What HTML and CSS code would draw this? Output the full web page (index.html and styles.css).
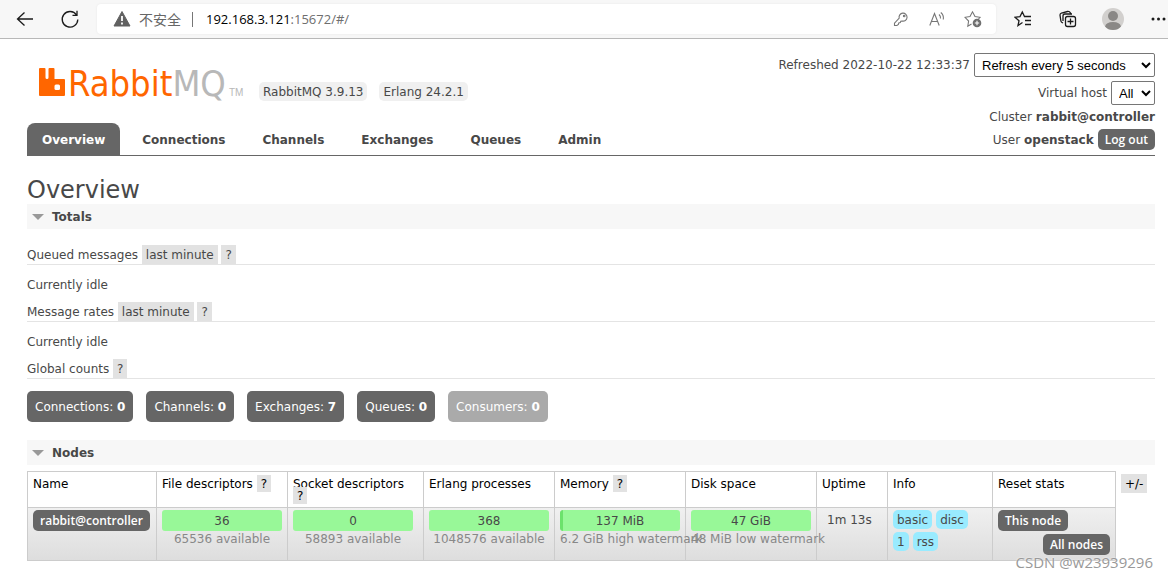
FILE: index.html
```html
<!DOCTYPE html>
<html lang="en">
<head>
	<meta charset="UTF-8">
	<meta name="viewport" content="width=device-width, initial-scale=1.0">
	<title>RabbitMQ Management</title>
	<link rel="stylesheet" href="styles.css">
</head>
<body>

	<!-- Browser toolbar -->
	<div class="toolbar">
		<button class="tool" aria-label="Back">
			<svg width="20" height="20" viewBox="0 0 20 20"><path d="M18 10H2.500M9.500 3.500L2.500 10L9.500 16.500"/></svg>
		</button>
		<button class="tool" aria-label="Reload">
			<svg width="20" height="20" viewBox="0 0 20 20"><path d="M16.500 6A7.800 7.800 0 1 0 17.800 10.500M17 1.800V6.300H12.500"/></svg>
		</button>
		<div class="address">
			<svg class="warn" width="18" height="18" viewBox="0 0 18 18"><path d="M9 1.500L17 16H1z" fill="#616161" stroke="#616161" stroke-linejoin="round"/><path d="M9 6V11M9 12.500V14.500" stroke="#fff" stroke-width="1.800"/></svg>
			<span class="insecure">不安全</span>
			<span class="url"><b>192.168.3.121</b>:15672/#/</span>
			<button class="tool pale" aria-label="Password">
				<svg width="18" height="18" viewBox="0 0 18 18"><path d="M7.200 8.200A4 4 0 1 1 10 11L8.800 11.200L8.300 12.600L6.800 12.900L6.400 14.500L4.900 15.500H2.500V13.200z"/><circle cx="12.200" cy="6" r=".8"/></svg>
			</button>
			<button class="tool pale" aria-label="Read aloud">
				<svg width="18" height="18" viewBox="0 0 18 18"><path d="M1.800 15.500L6.500 3.500L11.200 15.500M3.300 11.500H9.700M11 4.500Q12.800 6 12.500 8.500M12.800 2.500Q16 5 15.300 9.500"/></svg>
			</button>
			<button class="tool pale" aria-label="Add to favorites">
				<svg width="18" height="18" viewBox="0 0 18 18"><path d="M7.500 14L3.800 16.200L4.600 11L1 7.300L6 6.500L8.500 1.800L11 6.500L16 7.300L14.500 8.800"/><circle cx="13" cy="13" r="4.300" fill="#6f6f6f" stroke="none"/><path d="M13 10.800V15.200M10.800 13H15.200" stroke="#fff"/></svg>
			</button>
		</div>
		<button class="tool" aria-label="Favorites">
			<svg width="18" height="18" viewBox="0 0 18 18"><path d="M8.500 12.500L4 15.500L5 10.700L1 7.200L6 6.600L8.300 2L10.500 6.500H17M11 10.500H17M11 14.500H17"/></svg>
		</button>
		<button class="tool" aria-label="Collections">
			<svg width="18" height="18" viewBox="0 0 18 18"><rect x="6.500" y="6.500" width="10" height="10" rx="2"/><path d="M11.500 8.500V14.500M8.500 11.500H14.500M4 13L3 12.500Q2 12 1.800 10.500L1 5Q1 3.500 2.500 3L8.500 1.500Q10.500 1.200 11.500 3L12 4M4 11V6Q4 4 6 4H13"/></svg>
		</button>
		<button class="tool" aria-label="Profile">
			<svg width="24" height="24" viewBox="0 0 24 24"><circle cx="12" cy="12" r="11" fill="#d2d0ce" stroke="none"/><circle cx="12" cy="9" r="5" fill="#8a8886" stroke="none"/><path d="M4 19.500Q5 15 12 15T20 19.500Q17 23 12 23T4 19.500z" fill="#8a8886" stroke="none"/></svg>
		</button>
		<button class="tool" aria-label="Settings and more">
			<svg width="18" height="18" viewBox="0 0 18 18"><g fill="#1b1b1b" stroke="none"><circle cx="4" cy="9" r="1.500"/><circle cx="9.500" cy="9" r="1.500"/><circle cx="15" cy="9" r="1.500"/></g></svg>
		</button>
	</div>

	<div class="page">
		<header class="head">
			<div class="head-left">
				<div class="brand">
					<svg class="logo" width="210" height="40" viewBox="0 0 210 40" role="img" aria-label="RabbitMQ">
						<path d="M1 1H5.500Q6.500 1 6.500 2V10.500Q6.500 12 8 12T9.500 10.500V2Q9.500 1 10.500 1H14.500Q15.500 1 15.500 2V12H25Q26 12 26 13V28Q26 29 25 29H1Q0 29 0 28V2Q0 1 1 1z" fill="#f60"/>
						<rect x="15.500" y="17.500" width="5.500" height="5.500" rx="1.500" fill="#fff"/>
						<text class="logo-text" x="29" y="29"><tspan fill="#f60">Rabbit</tspan><tspan fill="#b8b8b8">MQ</tspan></text>
						<text class="logo-tm" x="190" y="29">TM</text>
					</svg>
					<span class="version">RabbitMQ 3.9.13</span>
					<span class="version">Erlang 24.2.1</span>
				</div>
				<nav class="tabs">
					<a class="selected" href="#/">Overview</a>
					<a href="#/connections">Connections</a>
					<a href="#/channels">Channels</a>
					<a href="#/exchanges">Exchanges</a>
					<a href="#/queues">Queues</a>
					<a href="#/users">Admin</a>
				</nav>
			</div>
			<div class="status">
				<div class="status-row">
					<label for="refresh">Refreshed 2022-10-22 12:33:37</label>
					<select id="refresh">
						<option>Refresh every 5 seconds</option>
						<option>Refresh every 10 seconds</option>
						<option>Refresh every 30 seconds</option>
						<option>Do not refresh</option>
					</select>
				</div>
				<div class="status-row">
					<label for="vhost">Virtual host</label>
					<select id="vhost"><option>All</option></select>
				</div>
				<div class="status-row">Cluster <b>rabbit@controller</b></div>
				<div class="status-row">User <b>openstack</b> <button class="dark">Log out</button></div>
			</div>
		</header>

		<main>
			<h1>Overview</h1>

			<!-- Totals -->
			<h2>Totals</h2>
			<div class="totals">
				<h3>Queued messages <button class="tag">last minute</button> <button class="tag">?</button></h3>
				<p>Currently idle</p>
				<h3>Message rates <button class="tag">last minute</button> <button class="tag">?</button></h3>
				<p>Currently idle</p>
				<h3>Global counts <button class="tag">?</button></h3>
				<div class="counts">
					<a href="#/connections">Connections: <b>0</b></a>
					<a href="#/channels">Channels: <b>0</b></a>
					<a href="#/exchanges">Exchanges: <b>7</b></a>
					<a href="#/queues">Queues: <b>0</b></a>
					<span class="off">Consumers: <b>0</b></span>
				</div>
			</div>

			<!-- Nodes -->
			<h2>Nodes</h2>
			<div class="nodes">
				<table>
					<colgroup>
						<col class="c-name"><col class="c-stat"><col class="c-sock"><col class="c-stat"><col class="c-stat"><col class="c-stat"><col class="c-up"><col class="c-info"><col class="c-reset">
					</colgroup>
					<thead>
						<tr>
							<th>Name</th>
							<th>File descriptors <span class="tag">?</span></th>
							<th>Socket descriptors <span class="tag">?</span></th>
							<th>Erlang processes</th>
							<th>Memory <span class="tag">?</span></th>
							<th>Disk space</th>
							<th>Uptime</th>
							<th>Info</th>
							<th>Reset stats</th>
						</tr>
					</thead>
					<tbody>
						<tr>
							<td><a class="dark" href="#/nodes/rabbit">rabbit@controller</a></td>
							<td><div class="stat"><div class="bar">36</div><small>65536 available</small></div></td>
							<td><div class="stat"><div class="bar">0</div><small>58893 available</small></div></td>
							<td><div class="stat"><div class="bar">368</div><small>1048576 available</small></div></td>
							<td><div class="stat"><div class="bar used">137 MiB</div><small>6.2 GiB high watermark</small></div></td>
							<td><div class="stat"><div class="bar">47 GiB</div><small>48 MiB low watermark</small></div></td>
							<td class="uptime">1m 13s</td>
							<td><div class="infos"><abbr>basic</abbr><abbr>disc</abbr><abbr>1</abbr><abbr>rss</abbr></div></td>
							<td><div class="resets"><button class="dark">This node</button><button class="dark">All nodes</button></div></td>
						</tr>
					</tbody>
				</table>
				<button class="tag">+/-</button>
			</div>
		</main>
	</div>

	<div class="watermark">CSDN @w23939296</div>

</body>
</html>
```
FILE: styles.css
```css
:root{
	--text: #484848;
	--dark: #666;
	--tag: #e2e2e2;
	--line: #ccc;
	--round: 5px;
}
*{
	box-sizing: border-box;
}
body{
	margin: 0;
	background: #fff;
	color: var(--text);
	font: 12px/16px "DejaVu Sans", Verdana, sans-serif;
	position: relative;
}
button{
	margin: 0;
	border: none;
	background: none;
	padding: 0;
	color: inherit;
	font: inherit;
	cursor: pointer;
}
a{
	color: inherit;
	text-decoration: none;
}
p, h1, h2, h3{
	margin: 0;
	font-weight: normal;
}

/* browser toolbar */
.toolbar{
	display: flex;
	align-items: center;
	height: 39px;
	padding-left: 15px;
	background: #f7f7f7;
	border-bottom: 1px solid #b8b8b8;
	gap: 25px;
}
.tool{
	display: flex;
	flex: none;
	justify-content: center;
	width: 20px;
}
.tool svg{
	flex: none;
	fill: none;
	stroke: #1b1b1b;
	stroke-width: 1.3;
}
.tool.pale svg{
	stroke: #767676;
	stroke-width: 1.1;
}
.address{
	flex: 1;
	display: flex;
	align-items: center;
	height: 30px;
	margin: 0 -8px;
	padding: 0 13px 0 16px;
	gap: 16px;
	background: #fff;
	border-radius: 4px;
	box-shadow: 0 0 2px #e4e4e4;
}
.warn{
	flex: none;
}
.insecure{
	margin-left: -8px;
	padding-right: 11px;
	border-right: 1px solid #767676;
	color: #666;
	font: 14px/15px "Noto Sans CJK SC", sans-serif;
}
.url{
	flex: 1;
	margin-left: -3px;
	color: #6e6e6e;
	font: 13px/18px "Open Sans", sans-serif;
}
.url b{
	color: #000;
	font-weight: normal;
}

.page{
	padding: 0 13px 16px 27px;
}

/* header */
.head{
	display: flex;
	justify-content: space-between;
	align-items: flex-end;
	border-bottom: 1px solid var(--dark);
}
.brand{
	display: flex;
	align-items: flex-end;
	gap: 12px;
	padding-left: 12px;
	margin-bottom: 16px;
}
.logo{
	margin-right: -2px;
	overflow: visible;
}
.logo-text{
	font: 36px "DejaVu Sans Condensed", "DejaVu Sans", sans-serif;
}
.logo-tm{
	font: 10px "Liberation Sans", sans-serif;
	fill: #b8b8b8;
}
.version{
	margin-bottom: 6px;
	padding: 2px 4px 1px;
	background: #f0f0f0;
	border-radius: var(--round);
}
.tabs{
	display: flex;
	gap: 7px;
}
.tabs a{
	padding: 9px 15px 7px;
	border-radius: 8px 8px 0 0;
	font-weight: bold;
}
.tabs .selected{
	background: var(--dark);
	color: #fff;
}
.status{
	display: flex;
	flex-direction: column;
	gap: 4px;
	padding: 14px 0 5px;
}
.status-row{
	display: flex;
	justify-content: flex-end;
	align-items: center;
	gap: 4px;
}
.status select{
	height: 24px;
	padding: 0 4px 0 3px;
	border: 1px solid #767676;
	border-radius: 2px;
	background: #fff;
	color: #000;
	font: 13px "Liberation Sans", Arial, sans-serif;
}
.dark{
	display: inline-block;
	padding: 3px 7px 2px;
	border-radius: var(--round);
	background: var(--dark);
	color: #fff;
	font-family: "Open Sans", sans-serif;
	font-weight: 600;
}

/* sections */
h1{
	padding-top: 21px;
	font-size: 24px;
	line-height: 27px;
}
h2{
	display: flex;
	align-items: center;
	gap: 8px;
	height: 25px;
	padding-left: 5px;
	background: #f7f7f7;
	font-weight: bold;
	font-size: 12px;
}
h2::before{
	content: "";
	border: solid transparent;
	border-width: 6px 6px 0;
	border-top-color: #999;
}
h3{
	border-bottom: 1px solid #e4e4e4;
	font-size: 12px;
}
.tag{
	padding: 2px 4px 1px;
	background: var(--tag);
}
.totals{
	padding: 16px 0 18px;
}
.totals p{
	padding: 12px 0 9px;
}
.counts{
	display: flex;
	gap: 13px;
	padding-top: 12px;
}
.counts > *{
	padding: 8px 8px 7px;
	border-radius: var(--round);
	background: var(--dark);
	color: #fff;
}
.counts .off{
	background: #aaa;
}

/* nodes table */
.nodes{
	display: flex;
	align-items: flex-start;
	gap: 5px;
	padding-top: 6px;
}
.nodes > .tag{
	margin-top: 3px;
	color: #000;
}
table{
	width: 1089px;
	table-layout: fixed;
	border-collapse: collapse;
}
.c-name{ width: 129px; }
.c-stat{ width: 131px; }
.c-sock{ width: 136px; }
.c-up{ width: 71px; }
.c-info{ width: 105px; }
.c-reset{ width: 123px; }
th, td{
	border: 1px solid var(--line);
	text-align: left;
	vertical-align: top;
}
th{
	height: 36px;
	padding: 6px 5px 4px;
	color: #000;
	font-weight: normal;
	line-height: 12px;
}
td{
	height: 53px;
	padding: 2px 5px;
}
tbody tr{
	background: linear-gradient(#f0f0f0, #ddd);
}
.stat{
	width: 120px;
	text-align: center;
	white-space: nowrap;
}
.bar{
	padding: 3px 0 2px;
	border-radius: 3px;
	background: #98f898;
}
.bar.used{
	background: linear-gradient(to right, #6ce26c 3px, #98f898 3px);
}
.stat small{
	display: block;
	color: #888;
	font-size: 12px;
}
.uptime{
	padding: 4px 10px;
	white-space: nowrap;
}
.infos{
	display: flex;
	flex-wrap: wrap;
	gap: 3px 4px;
	padding-right: 10px;
}
.infos abbr{
	padding: 2px 4px 1px;
	border-radius: var(--round);
	background: #99ebff;
}
.resets{
	display: flex;
	flex-direction: column;
	gap: 3px;
	align-items: flex-start;
}
.resets .dark + .dark{
	align-self: flex-end;
}

.watermark{
	position: absolute;
	right: 15px;
	bottom: 6px;
	color: #999;
	font: 15px/18px "Open Sans", sans-serif;
	text-shadow: 0 0 2px #fff;
}
```
